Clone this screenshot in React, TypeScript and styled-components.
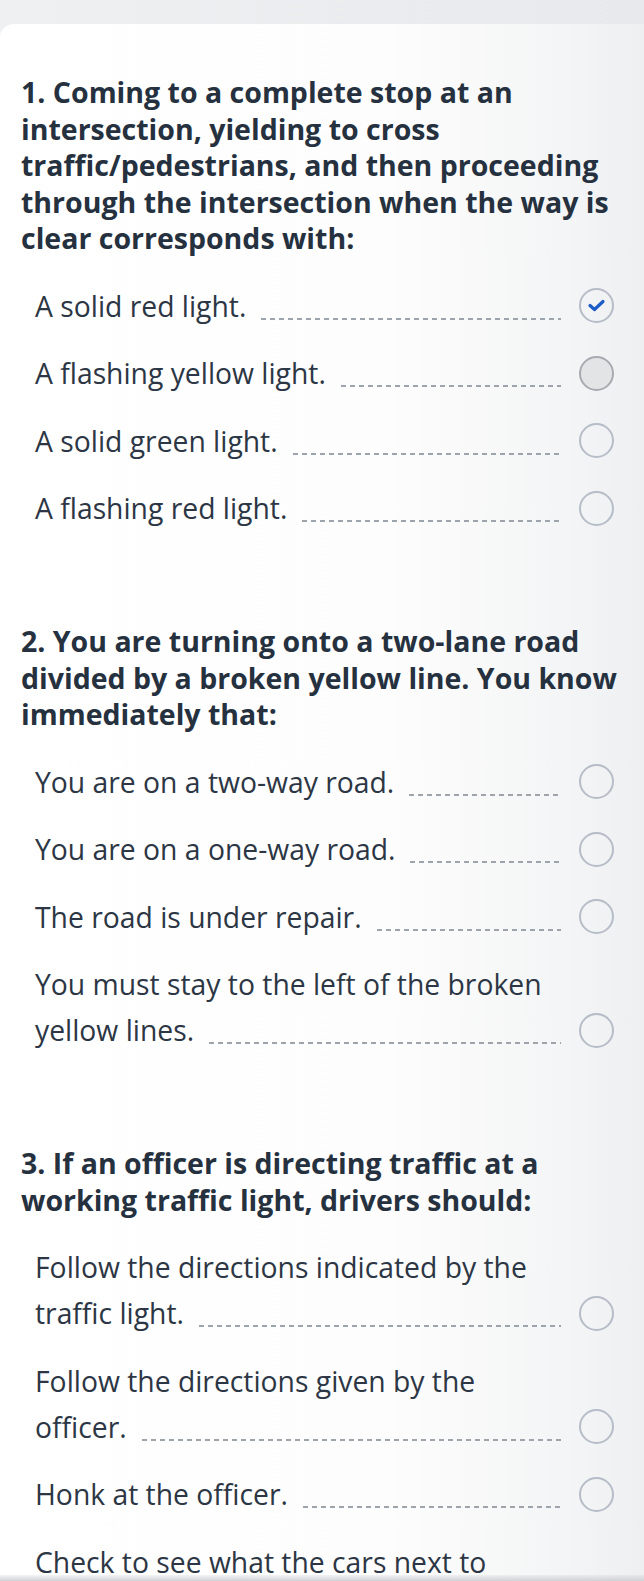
import React from "react";
import styled, { createGlobalStyle } from "styled-components";

const GlobalStyle = createGlobalStyle`
  html, body {
    margin: 0;
    padding: 0;
    background: #e9ebee;
  }
  body {
    font-family: "Open Sans", "Noto Sans", sans-serif;
    -webkit-font-smoothing: antialiased;
  }
`;

const Page = styled.div`
  padding-top: 24px;
  background: linear-gradient(to right, #eef0f2, #e7e9ec);
  min-height: 1600px;
`;

const Card = styled.main`
  border-radius: 14px 0 0 0;
  background: linear-gradient(to right, #ffffff 0%, #fdfdfd 60%, #f3f4f5 90%, #eeeff1 100%);
  padding: 50px 26px 60px 21px;
  min-height: 1560px;
  box-sizing: border-box;
`;

const QuestionBlock = styled.section`
  & + & {
    margin-top: 92px;
  }
`;

const Heading = styled.h2`
  margin: 0 0 26px 0;
  font-family: "Open Sans", "Noto Sans", sans-serif;
  font-weight: 700;
  font-size: 28.5px;
  line-height: 36.5px;
  color: #263140;
`;

const OptionList = styled.ul`
  list-style: none;
  margin: 0;
  padding: 0 4px 0 14px;
  display: flex;
  flex-direction: column;
  gap: 21.5px;
`;

const Option = styled.li`
  font-size: 28.3px;
  line-height: 46px;
  color: #2c3644;
`;

const LeadLine = styled.div``;

const LastLine = styled.div`
  display: flex;
  align-items: center;
`;

const OptionText = styled.span`
  white-space: nowrap;
`;

const Leader = styled.span`
  flex: 1;
  align-self: flex-end;
  height: 2px;
  margin: 0 18px 9px 15px;
  background-image: repeating-linear-gradient(
    to right,
    #9ea4ac 0 5px,
    transparent 5px 9px
  );
`;

const Radio = styled.span<{ $state: "checked" | "pressed" | "empty" }>`
  flex: 0 0 auto;
  width: 35px;
  height: 35px;
  box-sizing: border-box;
  border-radius: 50%;
  border: 2px solid ${(p) => (p.$state === "pressed" ? "#a7abb1" : "#b6bdc8")};
  background: ${(p) => (p.$state === "pressed" ? "#e3e4e6" : "transparent")};
  display: flex;
  align-items: center;
  justify-content: center;
`;

type Opt = { lines: string[]; state?: "checked" | "pressed" | "empty" };
type Q = { title: string; options: Opt[] };

const questions: Q[] = [
  {
    title:
      "1. Coming to a complete stop at an intersection, yielding to cross traffic/pedestrians, and then proceeding through the intersection when the way is clear corresponds with:",
    options: [
      { lines: ["A solid red light."], state: "checked" },
      { lines: ["A flashing yellow light."], state: "pressed" },
      { lines: ["A solid green light."] },
      { lines: ["A flashing red light."] },
    ],
  },
  {
    title:
      "2. You are turning onto a two-lane road divided by a broken yellow line. You know immediately that:",
    options: [
      { lines: ["You are on a two-way road."] },
      { lines: ["You are on a one-way road."] },
      { lines: ["The road is under repair."] },
      { lines: ["You must stay to the left of the broken", "yellow lines."] },
    ],
  },
  {
    title:
      "3. If an officer is directing traffic at a working traffic light, drivers should:",
    options: [
      { lines: ["Follow the directions indicated by the", "traffic light."] },
      { lines: ["Follow the directions given by the", "officer."] },
      { lines: ["Honk at the officer."] },
      { lines: ["Check to see what the cars next to", "you are doing."] },
    ],
  },
];

const BottomShade = styled.div`
  position: fixed;
  left: 0;
  right: 0;
  bottom: 0;
  height: 6px;
  background: linear-gradient(to bottom, rgba(200, 202, 206, 0.2), #cfd1d4);
`;

const Check = () => (
  <svg width="19" height="15" viewBox="0 0 19 15" aria-hidden="true">
    <polyline
      points="3,7.5 7.5,11.5 16,3.5"
      fill="none"
      stroke="#1b5cc6"
      strokeWidth="3.2"
      strokeLinecap="round"
      strokeLinejoin="round"
    />
  </svg>
);

export default function App() {
  return (
    <>
      <GlobalStyle />
      <Page>
        <Card>
          {questions.map((q) => (
            <QuestionBlock key={q.title}>
              <Heading>{q.title}</Heading>
              <OptionList>
                {q.options.map((o) => {
                  const lead = o.lines.slice(0, -1);
                  const last = o.lines[o.lines.length - 1];
                  const state = o.state ?? "empty";
                  return (
                    <Option key={o.lines.join(" ")}>
                      {lead.map((l) => (
                        <LeadLine key={l}>{l}</LeadLine>
                      ))}
                      <LastLine>
                        <OptionText>{last}</OptionText>
                        <Leader />
                        <Radio $state={state}>{state === "checked" && <Check />}</Radio>
                      </LastLine>
                    </Option>
                  );
                })}
              </OptionList>
            </QuestionBlock>
          ))}
        </Card>
      </Page>
      <BottomShade />
    </>
  );
}
